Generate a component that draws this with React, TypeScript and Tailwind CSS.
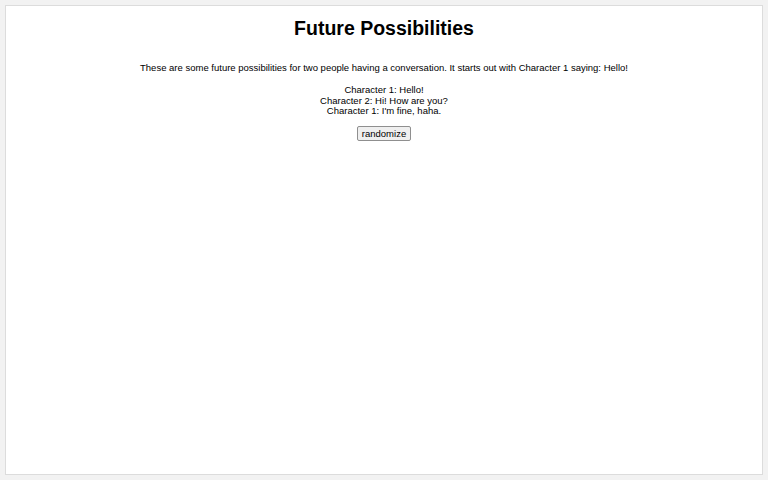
export default function App() {
  const lines = ['Character 1: Hello!', 'Character 2: Hi! How are you?', "Character 1: I'm fine, haha."];

  return (
    <div className="h-[480px] w-[768px] bg-[#f2f2f2] p-[5px] font-['Liberation_Sans',Arial,sans-serif] text-black">
      <div className="flex h-full flex-col items-center border border-[#dcdcdc] bg-white">
        <h1 className="mt-[8px] text-[19.5px] font-bold leading-[28px]">Future Possibilities</h1>
        <p className="mt-[20px] text-[9.5px] leading-[11px]">
          These are some future possibilities for two people having a conversation. It starts out with Character 1 saying: Hello!
        </p>
        <div className="mt-[12px] flex flex-col items-center text-[9.5px] leading-[10.5px]">
          {lines.map((line, i) => (
            <div key={i}>{line}</div>
          ))}
        </div>
        <button className="mt-[9px] rounded-[2px] border border-[#8f8f8f] bg-[#efefef] px-[4px] text-[9.5px] leading-[13px]">
          randomize
        </button>
      </div>
    </div>
  );
}
